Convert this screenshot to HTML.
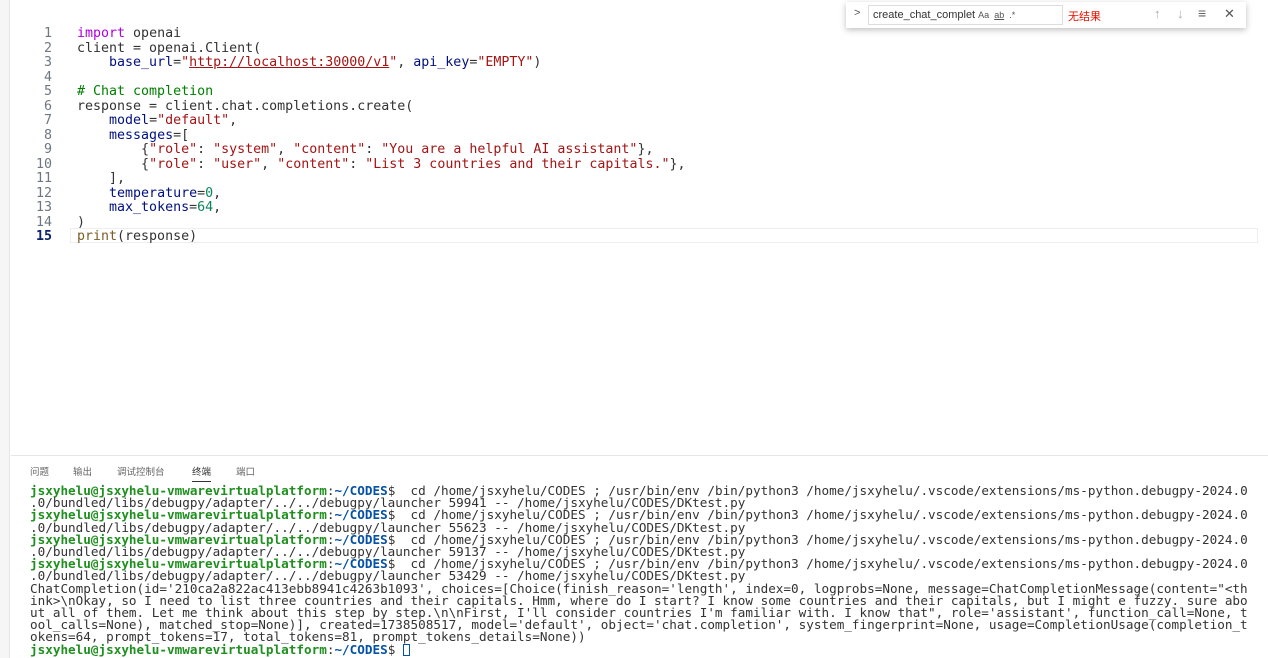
<!DOCTYPE html>
<html><head><meta charset="utf-8"><style>
*{margin:0;padding:0;box-sizing:border-box}
body{width:1268px;height:658px;background:#fff;position:relative;overflow:hidden;font-family:"DejaVu Sans Mono","Liberation Mono",monospace}
.side{position:absolute;left:0;top:0;width:10px;height:658px;background:#f6f6f6;border-right:1px solid #e6e6e6}
.ed{position:absolute;left:0;top:27px;font-size:13.3px;line-height:14.5px;white-space:pre;color:#333}
.ln{position:absolute;left:26px;width:26px;text-align:right;color:#6e7681}
.ln.a{color:#0b216f;font-weight:bold}
.code{position:absolute;left:77px;top:0}
.k{color:#af00db}.s{color:#a31515}.c{color:#008000}.p{color:#001080}.n{color:#098658}.f{color:#795e26}
.cur{position:absolute;left:70px;top:228px;width:1188px;height:15px;border:1px solid #eee}
.find{position:absolute;left:846px;top:2px;width:400px;height:26px;background:#fff;box-shadow:0 2px 6px rgba(0,0,0,.25);font-family:"Liberation Sans","Noto Sans CJK SC",sans-serif;font-size:11px;color:#555}
.find .in{position:absolute;left:22px;top:3px;width:195px;height:20px;border:1px solid #ddd;padding:3px 4px;color:#333}
.panel{position:absolute;left:11px;top:455px;right:0;bottom:0;border-top:1px solid #e6e6e6}
.tabs{position:absolute;font-family:"Liberation Sans","Noto Sans CJK SC",sans-serif;font-size:9.5px;color:#666}
.tabs span{position:absolute;white-space:nowrap}
.term{position:absolute;left:30px;top:485px;font-size:12.65px;line-height:12.2px;white-space:pre;color:#333}
.g{color:#1f8f1f;font-weight:bold}.b{color:#0451a5;font-weight:bold}
</style></head><body>
<div class="side"></div>
<div class="cur"></div>
<div class="ed"><div class="ln" style="top:0">1</div><div class="ln" style="top:14.5px">2</div><div class="ln" style="top:29px">3</div><div class="ln" style="top:43.5px">4</div><div class="ln" style="top:58px">5</div><div class="ln" style="top:72.5px">6</div><div class="ln" style="top:87px">7</div><div class="ln" style="top:101.5px">8</div><div class="ln" style="top:116px">9</div><div class="ln" style="top:130.5px">10</div><div class="ln" style="top:145px">11</div><div class="ln" style="top:159.5px">12</div><div class="ln" style="top:174px">13</div><div class="ln" style="top:188.5px">14</div><div class="ln a" style="top:203px">15</div><div class="code"><span class="k">import</span> openai
client = openai.Client(
    <span class="p">base_url</span>=<span class="s">"<u>http://localhost:30000/v1</u>"</span>, <span class="p">api_key</span>=<span class="s">"EMPTY"</span>)

<span class="c"># Chat completion</span>
response = client.chat.completions.create(
    <span class="p">model</span>=<span class="s">"default"</span>,
    <span class="p">messages</span>=[
        {<span class="s">"role"</span>: <span class="s">"system"</span>, <span class="s">"content"</span>: <span class="s">"You are a helpful AI assistant"</span>},
        {<span class="s">"role"</span>: <span class="s">"user"</span>, <span class="s">"content"</span>: <span class="s">"List 3 countries and their capitals."</span>},
    ],
    <span class="p">temperature</span>=<span class="n">0</span>,
    <span class="p">max_tokens</span>=<span class="n">64</span>,
)
<span class="f">print</span>(response)</div></div>
<div class="find">
<span style="position:absolute;left:8px;top:5px">&gt;</span>
<div class="in">create_chat_complet <span style="font-size:9px;color:#555">Aa &nbsp;<u>ab</u> &nbsp;.*</span></div>
<span style="position:absolute;left:222px;top:6px;color:#e51400">无结果</span>
<span style="position:absolute;left:308px;top:4px;color:#aaa;font-size:13px">↑</span>
<span style="position:absolute;left:331px;top:4px;color:#aaa;font-size:13px">↓</span>
<span style="position:absolute;left:352px;top:3px;color:#666;font-size:14px">≡</span>
<span style="position:absolute;left:378px;top:4px;color:#555;font-size:13px">✕</span>
</div>
<div class="panel"></div>
<div class="tabs" style="left:0;top:464px;width:300px;height:20px">
<span style="left:30px">问题</span><span style="left:73px">输出</span><span style="left:117px">调试控制台</span><span style="left:192px;color:#333;border-bottom:1px solid #333;padding-bottom:3px">终端</span><span style="left:236px">端口</span>
</div>
<div class="term"><span class="g">jsxyhelu@jsxyhelu-vmwarevirtualplatform</span>:<span class="b">~/CODES</span>$  cd /home/jsxyhelu/CODES ; /usr/bin/env /bin/python3 /home/jsxyhelu/.vscode/extensions/ms-python.debugpy-2024.0
.0/bundled/libs/debugpy/adapter/../../debugpy/launcher 59941 -- /home/jsxyhelu/CODES/DKtest.py
<span class="g">jsxyhelu@jsxyhelu-vmwarevirtualplatform</span>:<span class="b">~/CODES</span>$  cd /home/jsxyhelu/CODES ; /usr/bin/env /bin/python3 /home/jsxyhelu/.vscode/extensions/ms-python.debugpy-2024.0
.0/bundled/libs/debugpy/adapter/../../debugpy/launcher 55623 -- /home/jsxyhelu/CODES/DKtest.py
<span class="g">jsxyhelu@jsxyhelu-vmwarevirtualplatform</span>:<span class="b">~/CODES</span>$  cd /home/jsxyhelu/CODES ; /usr/bin/env /bin/python3 /home/jsxyhelu/.vscode/extensions/ms-python.debugpy-2024.0
.0/bundled/libs/debugpy/adapter/../../debugpy/launcher 59137 -- /home/jsxyhelu/CODES/DKtest.py
<span class="g">jsxyhelu@jsxyhelu-vmwarevirtualplatform</span>:<span class="b">~/CODES</span>$  cd /home/jsxyhelu/CODES ; /usr/bin/env /bin/python3 /home/jsxyhelu/.vscode/extensions/ms-python.debugpy-2024.0
.0/bundled/libs/debugpy/adapter/../../debugpy/launcher 53429 -- /home/jsxyhelu/CODES/DKtest.py
ChatCompletion(id='210ca2a822ac413ebb8941c4263b1093', choices=[Choice(finish_reason='length', index=0, logprobs=None, message=ChatCompletionMessage(content="&lt;th
ink&gt;\nOkay, so I need to list three countries and their capitals. Hmm, where do I start? I know some countries and their capitals, but I might e fuzzy. sure abo
ut all of them. Let me think about this step by step.\n\nFirst, I'll consider countries I'm familiar with. I know that", role='assistant', function_call=None, t
ool_calls=None), matched_stop=None)], created=1738508517, model='default', object='chat.completion', system_fingerprint=None, usage=CompletionUsage(completion_t
okens=64, prompt_tokens=17, total_tokens=81, prompt_tokens_details=None))
<span class="g">jsxyhelu@jsxyhelu-vmwarevirtualplatform</span>:<span class="b">~/CODES</span>$ <span style="display:inline-block;width:7px;height:12px;border:1px solid #0451a5;vertical-align:-2px"></span></div>
</body></html>
